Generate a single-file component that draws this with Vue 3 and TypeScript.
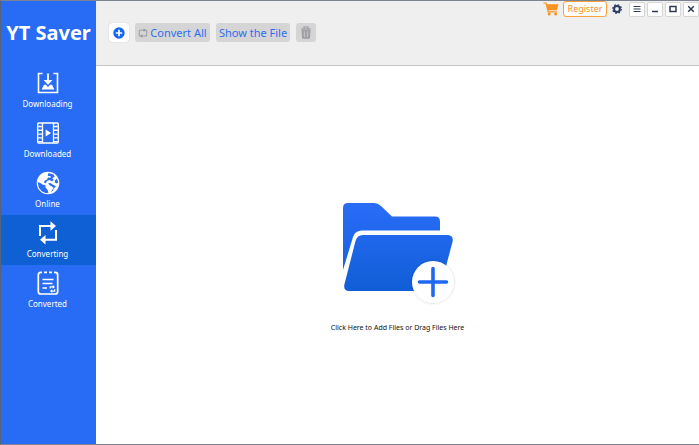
<script setup lang="ts">
import { ref } from 'vue'

type Page = 'Downloading' | 'Downloaded' | 'Online' | 'Converting' | 'Converted'

const pages: Page[] = ['Downloading', 'Downloaded', 'Online', 'Converting', 'Converted']
const active = ref<Page>('Converting')
</script>

<template>
  <div class="window">
    <aside class="sidebar">
      <h1 class="brand">YT Saver</h1>
      <nav class="nav">
        <button
          v-for="page in pages"
          :key="page"
          type="button"
          class="nav-item"
          :class="{ active: page === active }"
          @click="active = page"
        >
          <svg v-if="page === 'Downloading'" class="nav-icon" viewBox="0 0 24 24" fill="none" stroke="#fff">
            <path d="M6.500 2.500H2.500V21.500H21.500V2.500H17.500" stroke-width="1.6" />
            <path d="M12 2.500V10" stroke-width="1.8" />
            <path d="M7.6 9H16.4L12 14Z" fill="#fff" stroke="none" />
            <path d="M8 13.800H9.8L12 16L14.2 13.800H16L18.400 18.600H5.600Z" fill="#fff" stroke="none" />
          </svg>
          <svg v-else-if="page === 'Downloaded'" class="nav-icon" viewBox="0 0 24 24" fill="none" stroke="#fff">
            <rect x="1.700" y="2" width="20.600" height="20" rx="1" stroke-width="1.4" />
            <path d="M6.500 2V22M17.500 2V22" stroke-width="1.3" />
            <path d="M4.100 4.8V21M19.900 4.8V21" stroke-width="3.6" stroke-dasharray="1.4 2.4" />
            <path d="M9.700 8.600L15 12L9.700 15.400Z" fill="#fff" stroke="none" />
          </svg>
          <svg v-else-if="page === 'Online'" class="nav-icon" viewBox="0 0 24 24">
            <circle cx="12" cy="12" r="11.3" fill="#fff" />
            <g fill="#286cf5">
              <path d="M12.500 1.900L17.500 3.500L18.700 5.600L16.300 7.300L17.700 9.200L15.400 10.200L13.800 9L11.200 9.800L9.700 12.200L8 11.600L8.600 9.800L11 8.600L11.800 6.700L14.100 5.700L11.700 4.400Z" />
              <path d="M1.700 11.200L4.400 11.900L6.900 13.700L9.500 14.100L9.300 16.200L11.400 18.600L12.700 22.100L9.500 21.900L5.700 20.200L2.900 16.700Z" />
              <path d="M12 12.500L14.200 12L17.500 14L20 15.300L18 17.200L16.800 19.800L14.700 20.900L16 17.300L14.600 15Z" />
              <path d="M20.800 7.800L22.300 11.300L20.800 12.500L18.800 11.400L19.200 9.300Z" />
            </g>
            <path d="M9.700 15.300L12.300 13.700L16 15.400L17.600 17L14.600 20.900L12.700 21.700L11.800 18.500Z" fill="#fff" />
            <path d="M12.600 5.300L14.300 4.900L15 6.200L13.600 7Z" fill="#fff" />
          </svg>
          <svg v-else-if="page === 'Converting'" class="nav-icon" viewBox="0 0 24 24" fill="none" stroke="#fff">
            <path d="M4 15V5H15M20 9V18.800H9" stroke-width="2" />
            <path d="M14.500 .2L20 5L14.500 9.800ZM9.500 14L4 18.8L9.500 23.6Z" fill="#fff" stroke="none" />
          </svg>
          <svg v-else class="nav-icon" viewBox="0 0 24 24" fill="none" stroke="#fff">
            <path d="M6 1.4H4.800Q2.300 1.4 2.300 4V20.400Q2.300 23 4.800 23H19.200Q21.700 23 21.700 20.400V4Q21.700 1.4 19.200 1.4H18" stroke-width="1.7" />
            <path d="M8 1.4H11M13 1.4H16" stroke-width="1.8" />
            <path d="M6.5 8.500H17.500M6.5 12.500H16.500M6.5 17H11" stroke-width="1.6" />
            <path d="M14.200 17.500V15.900H17.300M18.700 18.300V20.100H15.600" stroke-width="1.2" />
            <path d="M16.700 14L19 15.900L16.700 17.700ZM16.200 18.300L13.900 20.100L16.200 21.900Z" fill="#fff" stroke="none" />
          </svg>
          <span>{{ page }}</span>
        </button>
      </nav>
    </aside>

    <div class="content">
      <header class="header">
        <div class="toolbar">
          <button type="button" class="tool add" aria-label="Add">
            <svg width="12" height="12" viewBox="0 0 12 12">
              <circle cx="6" cy="6" r="5.7" fill="#1767f2" />
              <path d="M6 2.8V9.2M2.8 6H9.2" stroke="#fff" stroke-width="1.7" />
            </svg>
          </button>
          <button type="button" class="tool convert">
            <svg width="10" height="10" viewBox="0 0 10 10" fill="none" stroke="#999ba0">
              <path d="M3 8H1.300V2.2H6.2M7 2.2H8.700V8H3.8" />
              <path d="M5.6 .3L7.9 2.2L5.6 4.1ZM4.4 6.1L2.1 8L4.4 9.900Z" fill="#999ba0" stroke="none" />
            </svg>
            <span>Convert All</span>
          </button>
          <button type="button" class="tool show">Show the File</button>
          <button type="button" class="tool trash" aria-label="Delete">
            <svg width="12" height="13" viewBox="0 0 12 13" fill="none" stroke="#9b9ca0">
              <path d="M1 3H11M4 2.6V1H8V2.6" stroke-width="1.2" />
              <path d="M2 4.2H10L9.4 12.2H2.6Z" fill="#a4a5a9" />
              <path d="M4.5 5.5V11M7.500 5.5V11" stroke="#c4c4c6" stroke-width=".8" />
            </svg>
          </button>
        </div>

        <div class="controls">
          <button type="button" class="plain cart" aria-label="Cart">
            <svg width="16" height="14" viewBox="0 0 16 14">
              <path d="M.4 1H3L5.2 9.8H13.8" fill="none" stroke="#f7931e" stroke-width="1.2" />
              <path d="M3.4 2.2H15.6L13.8 8.2H5Z" fill="#f7931e" />
              <circle cx="6.2" cy="12" r="1.5" fill="#f7931e" />
              <circle cx="12.6" cy="12" r="1.5" fill="#f7931e" />
            </svg>
          </button>
          <button type="button" class="register">Register</button>
          <button type="button" class="plain gear" aria-label="Settings">
            <svg width="10" height="10" viewBox="0 0 10 10" fill="none" stroke="#2b3a62">
              <circle cx="5" cy="5" r="2.9" stroke-width="2" />
              <circle cx="5" cy="5" r="4.3" stroke-width="1.2" stroke-dasharray="1.7 1.677" />
            </svg>
          </button>
          <button type="button" class="ctl" aria-label="Menu">
            <svg viewBox="0 0 10 10"><path d="M1.5 2.500H8.5M1.5 5H8.5M1.5 7.500H8.5" stroke-width="1.2" /></svg>
          </button>
          <button type="button" class="ctl" aria-label="Minimize">
            <svg viewBox="0 0 10 10"><path d="M2 7.5H8" /></svg>
          </button>
          <button type="button" class="ctl" aria-label="Maximize">
            <svg viewBox="0 0 10 10"><path d="M2 2.5H8V7.5H2Z" /></svg>
          </button>
          <button type="button" class="ctl" aria-label="Close">
            <svg viewBox="0 0 10 10"><path d="M2.2 2.2L7.8 7.8M7.8 2.2L2.2 7.8" /></svg>
          </button>
        </div>
      </header>

      <main class="main">
        <button type="button" class="drop">
          <svg width="116" height="106" viewBox="0 0 116 106">
            <defs>
              <linearGradient id="folder" x1="0" y1="0" x2="0" y2="106" gradientUnits="userSpaceOnUse">
                <stop offset="0" stop-color="#2a6df6" />
                <stop offset="0.300" stop-color="#2168ee" />
                <stop offset="0.860" stop-color="#105ed6" />
              </linearGradient>
              <filter id="glow" x="-20%" y="-20%" width="140%" height="140%">
                <feDropShadow dx="0" dy="0" stdDeviation="1.2" flood-color="#000" flood-opacity=".25" />
              </filter>
            </defs>
            <path
              d="M3 70V8Q3 3 8 3H34Q38 3 41 6L52 16.5H95Q100 16.5 100 21.5V30.5H22Q15 30.5 13 37Z"
              fill="url(#folder)"
            />
            <path
              d="M23 35H107Q114 35 112.5 42L101 85Q99 91 93 91H9Q3 91 4.5 84L15.5 41Q17 35 23 35Z"
              fill="url(#folder)"
            />
            <circle cx="93" cy="82" r="21" fill="#fff" filter="url(#glow)" />
            <path d="M93 68.5V95.5M79.5 82H106.5" stroke="#1f68f2" stroke-width="3.6" stroke-linecap="round" />
          </svg>
          <span class="hint">Click Here to Add Files or Drag Files Here</span>
        </button>
      </main>
    </div>
  </div>
</template>

<style>
body {
  margin: 0;
}
</style>

<style scoped>
.window {
  display: flex;
  box-sizing: border-box;
  min-height: 100vh;
  border: 1px solid #7d8290;
  border-left-color: #55647e;
  border-right: 0;
  background: #fff;
  font-family: 'Noto Sans', 'Open Sans', sans-serif;
}

button {
  margin: 0;
  padding: 0;
  border: 0;
  background: none;
  font-family: inherit;
  cursor: pointer;
}

svg {
  display: block;
  flex: none;
}

.sidebar {
  flex: none;
  width: 95px;
  background: #286cf5;
  color: #fff;
}

.brand {
  margin: 0;
  height: 64px;
  font-size: 20px;
  line-height: 64px;
  font-weight: 700;
  text-align: center;
  white-space: nowrap;
}

.nav {
  display: flex;
  flex-direction: column;
}

.nav-item {
  display: flex;
  flex-direction: column;
  align-items: center;
  gap: 3px;
  height: 50px;
  padding: 6px 2px 0 0;
  box-sizing: border-box;
  color: #fff;
  font-size: 8px;
  line-height: 12px;
}

.nav-item.active {
  background: #0f60d5;
}

.nav-icon {
  width: 24px;
  height: 24px;
}

.content {
  display: flex;
  flex: 1;
  flex-direction: column;
  min-width: 0;
}

.header {
  display: flex;
  justify-content: space-between;
  align-items: flex-start;
  box-sizing: border-box;
  height: 65px;
  border-bottom: 1px solid #c4c4c4;
  background: #efefef;
}

.toolbar {
  display: flex;
  gap: 6px;
  padding: 22px 0 0 13px;
}

.tool {
  display: flex;
  align-items: center;
  justify-content: center;
  gap: 2px;
  height: 19px;
  border-radius: 3px;
  background: #d5d5d5;
  color: #2f6ef0;
  font-size: 11px;
  line-height: 19px;
  white-space: nowrap;
}

.add,
.trash {
  width: 20px;
}

.add {
  background: #fff;
  box-shadow: 0 0 1px #aaa;
}

.convert {
  width: 75px;
}

.show {
  width: 74px;
}

.controls {
  display: flex;
  align-items: center;
  gap: 2px;
}

.cart {
  margin-right: 2px;
}

.register {
  box-sizing: border-box;
  width: 44px;
  height: 16px;
  border: 1px solid #f9a13c;
  border-radius: 3px;
  background: #fff;
  color: #f7931e;
  font-size: 9px;
  line-height: 14px;
}

.gear {
  padding: 0 5px 0 3px;
}

.ctl {
  display: grid;
  place-items: center;
  box-sizing: border-box;
  width: 16px;
  height: 15px;
  border: 1px solid #d6d6d6;
  border-radius: 2px;
  background: #fff;
}

.ctl svg {
  width: 10px;
  height: 10px;
  fill: none;
  stroke: #2f3a55;
  stroke-width: 1.5;
}

.main {
  display: grid;
  flex: 1;
  place-items: center;
}

.drop {
  display: flex;
  flex-direction: column;
  align-items: center;
  gap: 16px;
  padding-top: 24px;
}

.hint {
  color: #111;
  font-size: 7px;
  line-height: 12px;
  white-space: nowrap;
}
</style>
